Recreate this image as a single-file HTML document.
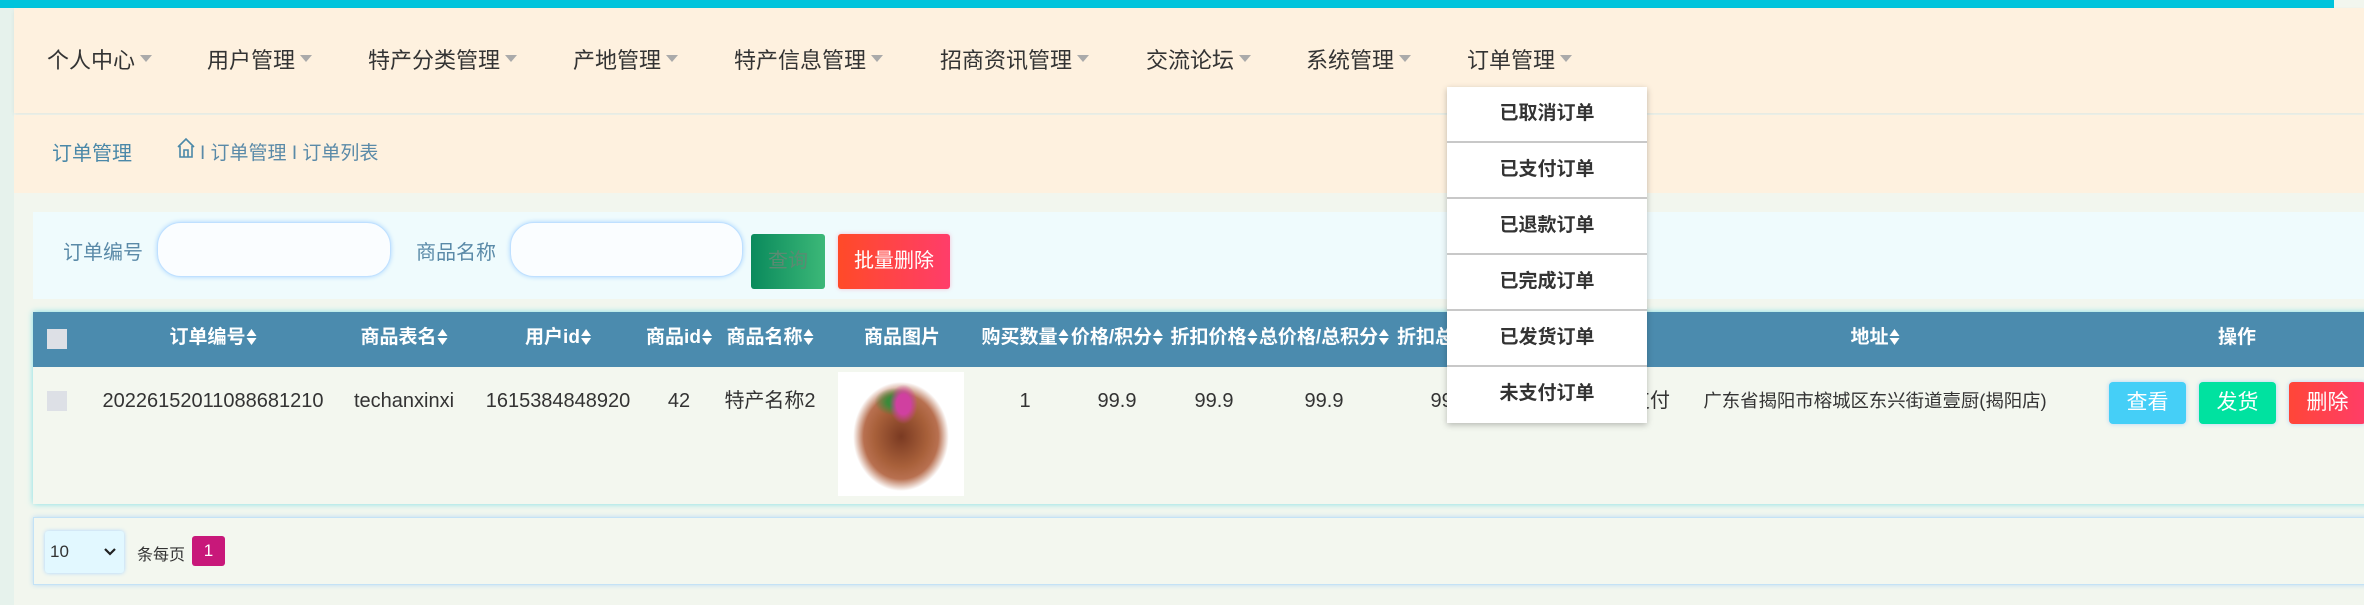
<!DOCTYPE html>
<html><head><meta charset="utf-8">
<style>
*{margin:0;padding:0;box-sizing:border-box}
body{width:2364px;height:605px;overflow:hidden;background:#f2f6ee;font-family:"Liberation Sans","Noto Sans CJK SC",sans-serif;position:relative}
.a{position:absolute}
.nav{left:14px;top:8px;width:2350px;height:105px;background:#fef1df;box-shadow:0 2px 4px rgba(0,0,0,.06)}
.ni{position:absolute;top:40px;font-size:22px;color:#333;white-space:nowrap;line-height:26px}
.tri{display:inline-block;width:0;height:0;border-left:6px solid transparent;border-right:6px solid transparent;border-top:7px solid #aaa;margin-left:5px;vertical-align:middle;position:relative;top:-4px}
.bc{left:14px;top:115px;width:2350px;height:78px;background:#fef1df}
.th{position:absolute;top:326px;color:#fff;font-weight:bold;font-size:19px;white-space:nowrap;transform:translateX(-50%);line-height:24px}
.td{position:absolute;top:388px;color:#333;font-size:20px;white-space:nowrap;transform:translateX(-50%);line-height:26px}
.s{display:inline-block;width:10px;height:16px;vertical-align:middle;position:relative;top:-1px;margin-left:1px}
.s:before{content:"";position:absolute;left:0;top:0;border-left:5px solid transparent;border-right:5px solid transparent;border-bottom:7px solid #fff}
.s:after{content:"";position:absolute;left:0;bottom:0;border-left:5px solid transparent;border-right:5px solid transparent;border-top:7px solid #fff}
.dd{left:1447px;top:87px;width:200px;background:#fff;box-shadow:0 2px 6px rgba(0,0,0,.25)}
.dd div{height:56px;border-bottom:2px solid #c8c8c8;text-align:center;line-height:54px;font-weight:bold;font-size:19px;color:#333}
.dd div:last-child{border-bottom:none}
.btn{position:absolute;top:382px;width:77px;height:42px;border-radius:4px;color:#fff;font-size:21px;text-align:center;line-height:42px;box-shadow:0 0 5px rgba(80,160,255,.4)}
</style></head><body>
<div class="a" style="left:0;top:0;width:14px;height:605px;background:#e6f2ec"></div>
<div class="a" style="left:0;top:0;width:2334px;height:8px;background:#00c4dc"></div>
<div class="a nav">
<span class="ni" style="left:33px">个人中心<i class="tri"></i></span>
<span class="ni" style="left:193px">用户管理<i class="tri"></i></span>
<span class="ni" style="left:354px">特产分类管理<i class="tri"></i></span>
<span class="ni" style="left:559px">产地管理<i class="tri"></i></span>
<span class="ni" style="left:720px">特产信息管理<i class="tri"></i></span>
<span class="ni" style="left:926px">招商资讯管理<i class="tri"></i></span>
<span class="ni" style="left:1132px">交流论坛<i class="tri"></i></span>
<span class="ni" style="left:1292px">系统管理<i class="tri"></i></span>
<span class="ni" style="left:1453px">订单管理<i class="tri"></i></span>
</div>
<div class="a bc">
<span class="a" style="left:38px;top:22px;font-size:20px;color:#4a88a8">订单管理</span>
<svg class="a" style="left:162px;top:22px" width="20" height="22" viewBox="0 0 20 22"><path d="M2 10 L10 2 L18 10 M4 9 V20 H16 V9 M8 20 V13 H12 V20" fill="none" stroke="#4a88a8" stroke-width="1.6"/></svg>
<span class="a" style="left:186px;top:23px;font-size:19px;color:#5a8aa8">I 订单管理 I 订单列表</span>
</div>
<div class="a" style="left:33px;top:212px;width:2331px;height:87px;background:#effbfd"></div>
<span class="a" style="left:63px;top:236px;font-size:20px;color:#5a8aa8">订单编号</span>
<div class="a" style="left:157px;top:222px;width:234px;height:55px;background:#fafdff;border-radius:24px;border:1px solid #bfe0ff;box-shadow:0 0 5px #a8d4ff"></div>
<span class="a" style="left:416px;top:236px;font-size:20px;color:#5a8aa8">商品名称</span>
<div class="a" style="left:510px;top:222px;width:233px;height:55px;background:#fafdff;border-radius:24px;border:1px solid #bfe0ff;box-shadow:0 0 5px #a8d4ff"></div>
<div class="a" style="left:751px;top:234px;width:74px;height:55px;border-radius:3px;background:linear-gradient(90deg,#0a8a5c,#3cb878);color:#5b8a72;font-size:20px;text-align:center;line-height:55px">查询</div>
<div class="a" style="left:838px;top:234px;width:112px;height:55px;border-radius:3px;background:linear-gradient(90deg,#ff4a28,#ff3d6a);color:#fff;font-size:20px;text-align:center;line-height:55px;box-shadow:0 0 4px rgba(255,100,150,.4)">批量删除</div>

<div class="a" style="left:33px;top:312px;width:2340px;height:192px;background:#f3f7ef;box-shadow:0 0 6px #7ee0e6"></div>
<div class="a" style="left:33px;top:312px;width:2340px;height:55px;background:#4b8bae"></div>
<div class="a" style="left:47px;top:329px;width:20px;height:20px;background:#dde0e6"></div>
<span class="th" style="left:213px">订单编号<i class="s"></i></span>
<span class="th" style="left:404px">商品表名<i class="s"></i></span>
<span class="th" style="left:558px">用户id<i class="s"></i></span>
<span class="th" style="left:679px">商品id<i class="s"></i></span>
<span class="th" style="left:770px">商品名称<i class="s"></i></span>
<span class="th" style="left:902px">商品图片</span>
<span class="th" style="left:1025px">购买数量<i class="s"></i></span>
<span class="th" style="left:1117px">价格/积分<i class="s"></i></span>
<span class="th" style="left:1214px">折扣价格<i class="s"></i></span>
<span class="th" style="left:1324px">总价格/总积分<i class="s"></i></span>
<span class="th" style="left:1450px">折扣总价格<i class="s"></i></span>
<span class="th" style="left:1600px">支付状态<i class="s"></i></span>
<span class="th" style="left:1875px">地址<i class="s"></i></span>
<span class="th" style="left:2237px">操作</span>

<div class="a" style="left:47px;top:391px;width:20px;height:20px;background:#dde0e6"></div>
<span class="td" style="left:213px">20226152011088681210</span>
<span class="td" style="left:404px">techanxinxi</span>
<span class="td" style="left:558px">1615384848920</span>
<span class="td" style="left:679px">42</span>
<span class="td" style="left:770px">特产名称2</span>
<div class="a" style="left:838px;top:372px;width:126px;height:124px;background:radial-gradient(ellipse 14% 20% at 52% 26%,#d040a0 40%,transparent 80%),radial-gradient(ellipse 20% 14% at 45% 24%,#3a8a3a 30%,transparent 80%),radial-gradient(ellipse 38% 44% at 50% 52%,#7a3a22 0,#a8603a 55%,#b87050 78%,transparent 100%),#fff"></div>
<span class="td" style="left:1025px">1</span>
<span class="td" style="left:1117px">99.9</span>
<span class="td" style="left:1214px">99.9</span>
<span class="td" style="left:1324px">99.9</span>
<span class="td" style="left:1450px">99.9</span>
<span class="td" style="left:1640px">已支付</span>
<span class="td" style="left:1875px;font-size:18.4px">广东省揭阳市榕城区东兴街道壹厨(揭阳店)</span>
<div class="btn" style="left:2109px;background:#45cff7">查看</div>
<div class="btn" style="left:2199px;background:#00e2a0">发货</div>
<div class="btn" style="left:2289px;background:linear-gradient(90deg,#ff4638,#ff3d68)">删除</div>

<div class="a" style="left:33px;top:517px;width:2340px;height:68px;background:#f3f7ef;border:1px solid #c4e2f6;box-shadow:0 0 5px #b8dcf4"></div>
<div class="a" style="left:45px;top:531px;width:79px;height:42px;background:#e2f8ff;border-radius:3px;box-shadow:0 0 4px #a8d4ff;font-size:17px;color:#333;line-height:42px;padding-left:5px">10<svg style="position:absolute;left:59px;top:17px" width="12" height="8" viewBox="0 0 12 8"><path d="M1 1 L6 6 L11 1" fill="none" stroke="#222" stroke-width="2.2"/></svg></div>
<span class="a" style="left:137px;top:541px;font-size:16px;color:#333">条每页</span>
<div class="a" style="left:192px;top:536px;width:33px;height:30px;background:#c8187a;border-radius:3px;color:#fff;font-size:17px;text-align:center;line-height:30px">1</div>

<div class="a dd">
<div>已取消订单</div><div>已支付订单</div><div>已退款订单</div><div>已完成订单</div><div>已发货订单</div><div>未支付订单</div>
</div>
</body></html>
